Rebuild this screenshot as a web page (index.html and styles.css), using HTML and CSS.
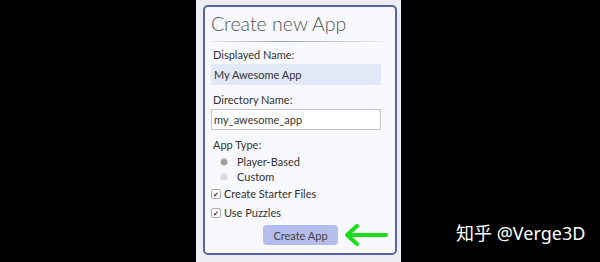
FILE: index.html
```html
<!DOCTYPE html>
<html>
<head>
    <title>Create new App</title>
    <link rel="stylesheet" href="styles.css">
</head>
<body>
    <div class="page">
        <div class="dialog">
            <h1>Create new App</h1>
            <hr class="title-rule">
            <div class="form-group">
                <label for="appName">Displayed Name:</label>
                <input type="text" id="appName" class="autofill" value="My Awesome App">
            </div>
            <div class="form-group">
                <label for="dirName">Directory Name:</label>
                <input type="text" id="dirName" value="my_awesome_app">
            </div>
            <div class="form-group type-group">
                <label>App Type:</label>
                <div class="radio-row"><span class="radio checked"></span>Player-Based</div>
                <div class="radio-row"><span class="radio"></span>Custom</div>
            </div>
            <div class="check-row"><span class="check">&#10004;</span>Create Starter Files</div>
            <div class="check-row"><span class="check">&#10004;</span>Use Puzzles</div>
            <div class="actions">
                <button type="button">Create App</button>
                <svg class="arrow" width="46" height="22" viewBox="0 0 46 22">
                    <path d="M44 11 H6 M15 2 L5 11 L15 20" fill="none" stroke="#18e018" stroke-width="4" stroke-linecap="round" stroke-linejoin="round"/>
                </svg>
            </div>
        </div>
    </div>
    <div class="watermark">知乎 @Verge3D</div>
</body>
</html>
```

FILE: styles.css
```css
body {
    margin: 0;
    background-color: #000;
    font-family: Lato, "Noto Sans", sans-serif;
    height: 262px;
    overflow: hidden;
}
.page {
    width: 205px;
    height: 262px;
    margin-left: 196px;
    background-color: #eceef3;
    padding: 5px 0 0 7px;
    box-sizing: border-box;
}
.dialog {
    width: 194px;
    height: 250px;
    box-sizing: border-box;
    border: 2px solid #5866a0;
    border-radius: 5px;
    background-color: #f8f9fc;
    padding: 3px 6px 0 6px;
}
h1 {
    font-weight: 300;
    font-size: 19.5px;
    color: #555;
    margin: 0;
    line-height: 28px;
}
.title-rule {
    border: none;
    height: 1px;
    margin: 3px 4px 5px 0;
    background: linear-gradient(to right, #e6e8ee, #9aa0ad 40%, #c8ccd6 75%, #eef0f4);
}
.form-group {
    margin-bottom: 7px;
}
.type-group {
    margin-bottom: 2px;
}
label {
    display: block;
    font-size: 11px;
    color: #333;
    margin-bottom: 2px;
    padding-left: 2px;
    line-height: 15px;
}
input {
    display: block;
    width: 170px;
    height: 21px;
    box-sizing: border-box;
    font-family: Lato, "Noto Sans", sans-serif;
    font-size: 11px;
    color: #333;
    padding: 2px 2px;
    border: 1px solid #c4c4c4;
    background-color: #fff;
    margin: 0;
}
input.autofill {
    background-color: #e1e9f9;
    border-color: #e1e9f9;
}
.radio-row {
    display: flex;
    align-items: center;
    font-size: 11px;
    color: #333;
    height: 15px;
    padding-left: 9px;
}
.radio {
    width: 6px;
    height: 6px;
    border-radius: 50%;
    background-color: #d8d8d8;
    border: 1px solid #e4e4e4;
    margin-right: 9px;
}
.radio.checked {
    background-color: #9a9a9a;
    border-color: #d0d0d0;
}
.check-row {
    display: flex;
    align-items: center;
    font-size: 11px;
    color: #333;
    height: 15px;
    margin-bottom: 4px;
}
.check {
    width: 8px;
    height: 8px;
    font-size: 7px;
    line-height: 8px;
    text-align: center;
    color: #333;
    background-color: #fff;
    border: 1px solid #aaa;
    border-radius: 2px;
    margin-right: 3px;
}
.actions {
    display: flex;
    align-items: center;
    justify-content: flex-end;
    margin-top: 3px;
    padding-right: 1px;
}
button {
    background-color: #b4bdeb;
    color: #444;
    font-family: Lato, "Noto Sans", sans-serif;
    font-size: 11px;
    width: 75px;
    height: 20px;
    padding: 0;
    border: none;
    border-radius: 4px;
}
.arrow {
    margin-left: 4px;
}
.watermark {
    position: absolute;
    left: 456px;
    top: 219px;
    color: #fff;
    font-family: "Noto Sans", "Noto Sans CJK SC", sans-serif;
    font-size: 18px;
}
```
